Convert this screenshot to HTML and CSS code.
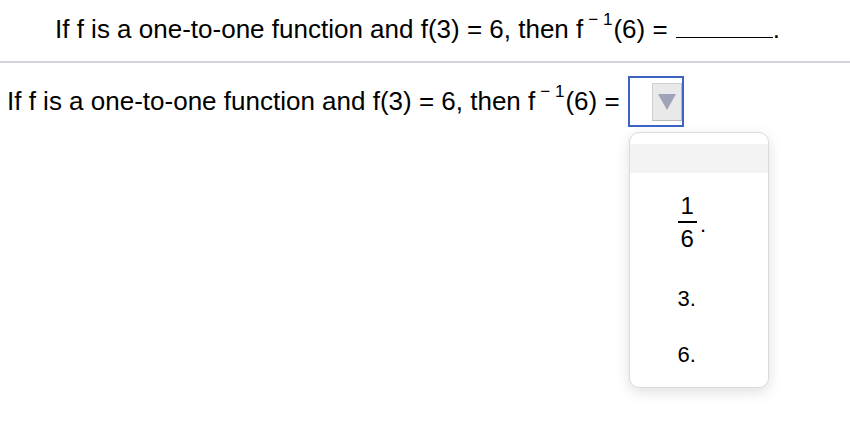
FILE: index.html
```html
<!DOCTYPE html>
<html lang="en">
<head>
  <meta charset="UTF-8">
  <title>Inverse function</title>
  <link rel="stylesheet" href="styles.css">
</head>
<body>
  <p class="question">
    If f is a one-to-one function and f(3) = 6, then f<sup class="inv">− 1</sup>(6) = <span class="blank"></span>.
  </p>
  <hr class="divider">
  <div class="answer">
    <span class="prompt">If f is a one-to-one function and f(3) = 6, then f<sup class="inv">− 1</sup>(6) =</span>
    <div class="picker">
      <div class="select">
        <span class="arrow"></span>
      </div>
      <div class="menu">
        <div class="opt empty"></div>
        <div class="opt tall">
          <span class="frac"><span class="num">1</span><span class="den">6</span></span><span class="dot">.</span>
        </div>
        <div class="opt">3.</div>
        <div class="opt">6.</div>
      </div>
    </div>
  </div>
</body>
</html>
```

FILE: styles.css
```css
html,
body {
  height: 100%;
}

body {
  margin: 0;
  min-height: 434px;
  font-family: "Liberation Sans", Arial, sans-serif;
  font-size: 26px;
  color: #000;
  background: #fff;
}

.question {
  margin: 0;
  padding: 14px 0 0 55px;
  height: 47px;
  line-height: 30px;
  white-space: nowrap;
}

.inv {
  font-size: 17px;
  vertical-align: 0;
  position: relative;
  top: -13px;
  margin-left: 5px;
  margin-right: 1px;
}

.blank {
  display: inline-block;
  width: 97px;
  border-bottom: 1px solid #000;
  margin-left: 1px;
}

.divider {
  margin: 0;
  border: none;
  border-top: 2px solid #d2d5df;
}

.answer {
  display: flex;
  align-items: center;
  padding: 13px 0 0 7px;
  white-space: nowrap;
}

.prompt {
  line-height: 30px;
  margin-top: 3px;
}

.picker {
  position: relative;
  margin-left: 8px;
}

.select {
  width: 52px;
  height: 47px;
  border: 2px solid #3b64c6;
  display: flex;
  align-items: center;
  justify-content: flex-end;
}

.arrow {
  width: 28px;
  height: 36px;
  background: #e9e9e9;
  border: 1px solid #cfcfcf;
  border-right-color: #b9b9b9;
  border-bottom-color: #b9b9b9;
  position: relative;
}

.arrow::after {
  content: "";
  position: absolute;
  left: 5px;
  top: 10px;
  border-left: 9px solid transparent;
  border-right: 9px solid transparent;
  border-top: 16px solid #9ea3b7;
}

.menu {
  position: absolute;
  z-index: 2;
  left: 1px;
  top: 56px;
  width: 140px;
  height: 256px;
  padding-top: 11px;
  background: #fff;
  border: 1px solid #dadada;
  border-radius: 10px;
  box-shadow: 0 4px 14px rgba(0, 0, 0, 0.13);
  box-sizing: border-box;
  font-size: 22px;
}

.opt {
  padding-left: 48px;
  height: 56px;
  display: flex;
  align-items: center;
}

.opt.empty {
  height: 29px;
  background: #f3f3f3;
}

.opt.tall {
  height: 98px;
}

.frac {
  display: inline-flex;
  flex-direction: column;
  align-items: center;
  font-size: 24px;
  line-height: 24px;
}

.num {
  padding: 0 3px 3px;
  border-bottom: 2px solid #000;
}

.den {
  padding-top: 4px;
}

.dot {
  margin-left: 3px;
  margin-top: 6px;
}
```
